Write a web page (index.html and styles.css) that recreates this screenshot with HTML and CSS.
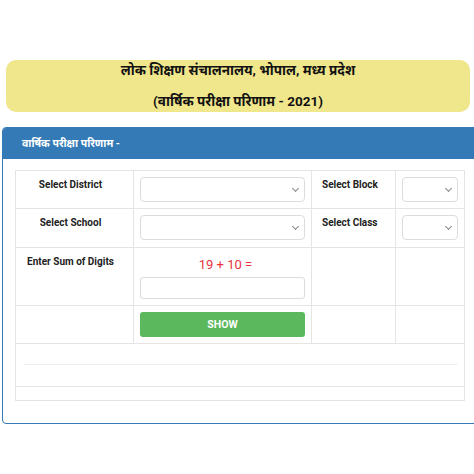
FILE: index.html
```html
<!DOCTYPE html>
<html lang="hi">
<head>
<meta charset="utf-8">
<link rel="stylesheet" href="styles.css">
</head>
<body>
<div class="page">
  <div class="banner">
    <h1 class="banner-title">लोक शिक्षण संचालनालय, भोपाल, मध्य प्रदेश</h1>
    <h2 class="banner-sub">(वार्षिक परीक्षा परिणाम - 2021)</h2>
  </div>
  <div class="panel">
    <div class="panel-heading">वार्षिक परीक्षा परिणाम -</div>
    <div class="panel-body">
      <table class="form-table">
        <colgroup>
          <col class="c1"><col class="c2"><col class="c3"><col class="c4">
        </colgroup>
        <tr class="r-sel">
          <td class="lbl">Select District</td>
          <td class="fld"><div class="select"><span class="chev"></span></div></td>
          <td class="lbl lbl-r">Select Block</td>
          <td class="fld"><div class="select"><span class="chev"></span></div></td>
        </tr>
        <tr class="r-sel r-sel2">
          <td class="lbl">Select School</td>
          <td class="fld"><div class="select"><span class="chev"></span></div></td>
          <td class="lbl lbl-r">Select Class</td>
          <td class="fld"><div class="select"><span class="chev"></span></div></td>
        </tr>
        <tr class="r-cap">
          <td class="lbl">Enter Sum of Digits</td>
          <td class="fld cap-cell">
            <div class="captcha">19 + 10 =</div>
            <div class="input"></div>
          </td>
          <td></td>
          <td></td>
        </tr>
        <tr class="r-btn">
          <td></td>
          <td class="fld"><div class="btn">SHOW</div></td>
          <td></td>
          <td></td>
        </tr>
        <tr class="r-empty">
          <td colspan="4" class="empty-cell"><div class="inner-line"></div></td>
        </tr>
        <tr class="r-thin">
          <td colspan="4"></td>
        </tr>
      </table>
    </div>
  </div>
</div>
</body>
</html>
```
FILE: styles.css
```css
html, body {
  margin: 0;
  padding: 0;
  background: #ffffff;
}
body {
  font-family: Roboto, "Liberation Sans", "Noto Sans", sans-serif;
  color: #222;
}
.page {
  width: 474px;
  height: 474px;
  overflow: hidden;
  padding-top: 60px;
  box-sizing: border-box;
}
.banner {
  margin: 0 4px 0 6px;
  height: 52px;
  background: #f0e68c;
  border-radius: 10px;
  display: flex;
  flex-direction: column;
  align-items: center;
  box-sizing: border-box;
  padding-top: 0;
}
.banner-title, .banner-sub {
  margin: 0;
  font-size: 13.5px;
  font-weight: bold;
  color: #111;
  line-height: 20px;
}
.banner-sub {
  margin-top: 11px;
}
.panel {
  margin: 15px -20px 0 2px;
  border: 1px solid #337ab7;
  border-radius: 4px;
  background: #fff;
  height: 297px;
  box-sizing: border-box;
  overflow: hidden;
}
.panel-heading {
  background: #337ab7;
  color: #fff;
  font-size: 10.5px;
  font-weight: bold;
  height: 31px;
  line-height: 31px;
  padding-left: 19px;
}
.panel-body {
  padding: 11px 0 0 12px;
}
.form-table {
  border-collapse: collapse;
  width: 449px;
  table-layout: fixed;
}
.c1 { width: 118px; }
.c2 { width: 178px; }
.c3 { width: 84px; }
.c4 { width: 69px; }
.form-table td {
  border: 1px solid #e4e4e4;
  padding: 0;
  vertical-align: top;
}
.form-table td.lbl {
  font-size: 10px;
  font-weight: bold;
  text-align: center;
  padding: 7px 8px 0 0;
  line-height: 13px;
  color: #222;
}
.form-table td.lbl-r {
  text-align: left;
  padding-left: 10px;
}
.r-sel { height: 38px; }
.r-sel2 { height: 39px; }
.form-table td.fld {
  padding: 6px 6px 0 6px;
}
.select {
  height: 25px;
  border: 1px solid #dcdcdc;
  border-radius: 4px;
  box-sizing: border-box;
  position: relative;
  background: #fff;
}
.chev {
  position: absolute;
  right: 6px;
  top: 8px;
  width: 4px;
  height: 4px;
  border-right: 1px solid #888;
  border-bottom: 1px solid #888;
  transform: rotate(45deg);
}
.r-cap { height: 58px; }
.form-table td.cap-cell {
  padding-top: 9px;
}
.captcha {
  color: #e8323c;
  font-size: 13px;
  text-align: center;
  line-height: 16px;
  padding-left: 6px;
}
.input {
  margin-top: 4px;
  height: 22px;
  border: 1px solid #dcdcdc;
  border-radius: 3px;
  box-sizing: border-box;
}
.r-btn { height: 38px; }
.btn {
  height: 25px;
  background: #5cb85c;
  border-radius: 3px;
  color: #fff;
  font-size: 10.5px;
  font-weight: bold;
  text-align: center;
  line-height: 25px;
}
.r-empty { height: 43px; }
.form-table td.empty-cell {
  padding: 20px 6px 0 8px;
}
.inner-line {
  border-top: 1px solid #efefef;
}
.r-thin { height: 14px; }
```
